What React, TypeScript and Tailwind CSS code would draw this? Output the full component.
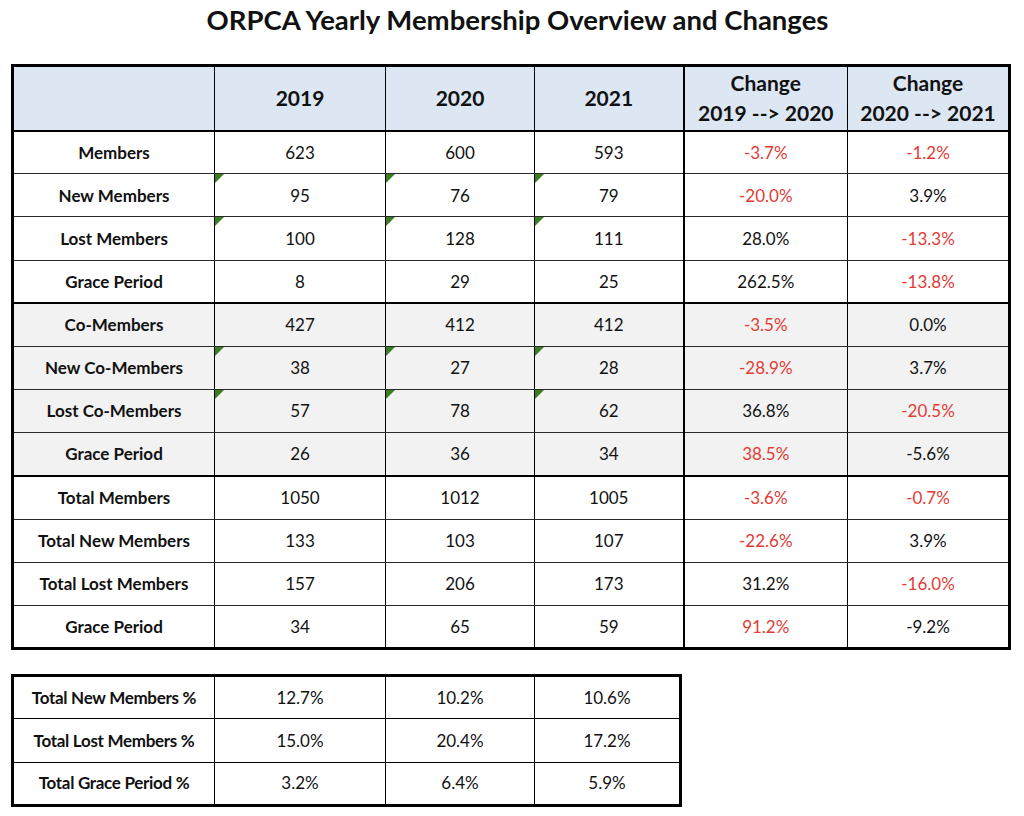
import React from "react";

type Cell = { v: string; red?: boolean; flag?: boolean };

const font = "font-['Lato','Open_Sans',sans-serif]";

const groups: { label: string; cells: Cell[] }[][] = [
  [
    { label: "Members", cells: [{ v: "623" }, { v: "600" }, { v: "593" }, { v: "-3.7%", red: true }, { v: "-1.2%", red: true }] },
    { label: "New Members", cells: [{ v: "95", flag: true }, { v: "76", flag: true }, { v: "79", flag: true }, { v: "-20.0%", red: true }, { v: "3.9%" }] },
    { label: "Lost Members", cells: [{ v: "100", flag: true }, { v: "128", flag: true }, { v: "111", flag: true }, { v: "28.0%" }, { v: "-13.3%", red: true }] },
    { label: "Grace Period", cells: [{ v: "8" }, { v: "29" }, { v: "25" }, { v: "262.5%" }, { v: "-13.8%", red: true }] },
  ],
  [
    { label: "Co-Members", cells: [{ v: "427" }, { v: "412" }, { v: "412" }, { v: "-3.5%", red: true }, { v: "0.0%" }] },
    { label: "New Co-Members", cells: [{ v: "38", flag: true }, { v: "27", flag: true }, { v: "28", flag: true }, { v: "-28.9%", red: true }, { v: "3.7%" }] },
    { label: "Lost Co-Members", cells: [{ v: "57", flag: true }, { v: "78", flag: true }, { v: "62", flag: true }, { v: "36.8%" }, { v: "-20.5%", red: true }] },
    { label: "Grace Period", cells: [{ v: "26" }, { v: "36" }, { v: "34" }, { v: "38.5%", red: true }, { v: "-5.6%" }] },
  ],
  [
    { label: "Total Members", cells: [{ v: "1050" }, { v: "1012" }, { v: "1005" }, { v: "-3.6%", red: true }, { v: "-0.7%", red: true }] },
    { label: "Total New Members", cells: [{ v: "133" }, { v: "103" }, { v: "107" }, { v: "-22.6%", red: true }, { v: "3.9%" }] },
    { label: "Total Lost Members", cells: [{ v: "157" }, { v: "206" }, { v: "173" }, { v: "31.2%" }, { v: "-16.0%", red: true }] },
    { label: "Grace Period", cells: [{ v: "34" }, { v: "65" }, { v: "59" }, { v: "91.2%", red: true }, { v: "-9.2%" }] },
  ],
];

const ratios = [
  { label: "Total New Members %", cells: ["12.7%", "10.2%", "10.6%"] },
  { label: "Total Lost Members %", cells: ["15.0%", "20.4%", "17.2%"] },
  { label: "Total Grace Period %", cells: ["3.2%", "6.4%", "5.9%"] },
];

function Flag() {
  return <span className="absolute left-0 top-0 h-0 w-0 border-t-[9px] border-r-[9px] border-t-[#3b7d23] border-r-transparent" />;
}

export default function App() {
  return (
    <div className={`${font} min-h-[816px] w-[1024px] bg-white pl-[11px] text-[#111]`}>
      <h1 className="pt-[1px] text-center text-[27.5px] font-bold leading-[37px]">
        ORPCA Yearly Membership Overview and Changes
      </h1>

      <table className="mt-[26px] w-[1000px] table-fixed border-collapse border-[3px] border-black text-[17px]">
        <colgroup>
          <col className="w-[202px]" />
          <col className="w-[171px]" />
          <col className="w-[149px]" />
          <col className="w-[149px]" />
          <col className="w-[164px]" />
          <col />
        </colgroup>
        <thead>
          <tr className="h-[65px] bg-[#dde7f3] text-[21px] font-bold leading-[30px]">
            <th className="border-b-2 border-r border-black" />
            <th className="border-b-2 border-r border-black">2019</th>
            <th className="border-b-2 border-r border-black">2020</th>
            <th className="border-b-2 border-r-2 border-black">2021</th>
            <th className="border-b-2 border-r border-black">
              Change
              <br />
              2019 --&gt; 2020
            </th>
            <th className="border-b-2 border-black">
              Change
              <br />
              2020 --&gt; 2021
            </th>
          </tr>
        </thead>
        {groups.map((rows, gi) => (
          <tbody key={gi} className={`${gi === 1 ? "bg-[#f2f2f2]" : "bg-white"} border-b-2 border-black`}>
            {rows.map((r, ri) => (
              <tr key={ri} className="h-[43.2px]">
                <td className={`${ri < 3 ? "border-b border-b-[#2a2a2a]" : ""} border-r border-black text-center font-bold`}>
                  {r.label}
                </td>
                {r.cells.map((c, ci) => (
                  <td
                    key={ci}
                    className={`relative text-center ${ri < 3 ? "border-b border-b-[#2a2a2a]" : ""} ${
                      ci === 2 ? "border-r-2 border-black" : ci < 4 ? "border-r border-black" : ""
                    } ${c.red ? "text-[#e23b35]" : ""}`}
                  >
                    {c.flag && <Flag />}
                    {c.v}
                  </td>
                ))}
              </tr>
            ))}
          </tbody>
        ))}
      </table>

      <table className="mt-[24px] w-[671px] table-fixed border-collapse border-[3px] border-black text-[17px]">
        <colgroup>
          <col className="w-[202px]" />
          <col className="w-[171px]" />
          <col className="w-[149px]" />
          <col />
        </colgroup>
        <tbody>
          {ratios.map((r, ri) => (
            <tr key={ri} className="h-[43.2px]">
              <td className={`${ri < 2 ? "border-b" : ""} border-r border-black text-center font-bold tracking-[-0.3px]`}>
                {r.label}
              </td>
              {r.cells.map((c, ci) => (
                <td key={ci} className={`${ri < 2 ? "border-b" : ""} ${ci < 2 ? "border-r" : ""} border-black text-center`}>
                  {c}
                </td>
              ))}
            </tr>
          ))}
        </tbody>
      </table>
    </div>
  );
}
